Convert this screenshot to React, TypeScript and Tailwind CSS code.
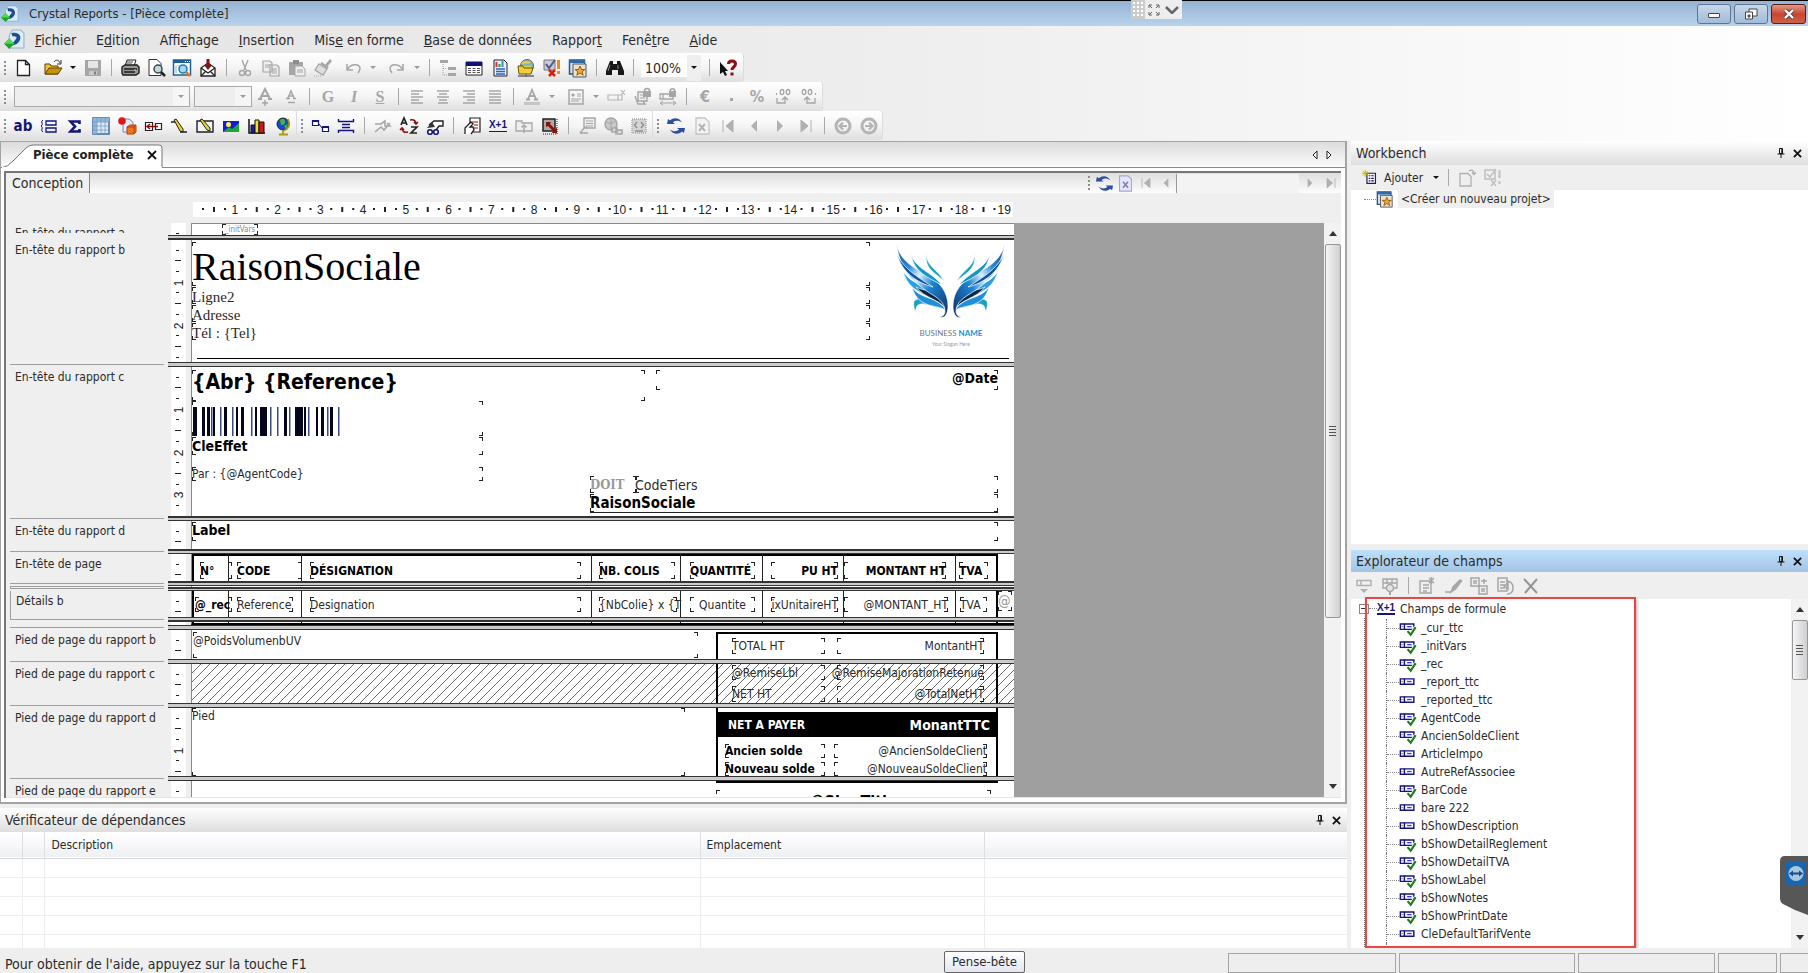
import type { ReactNode } from 'react';
import clsx from 'clsx';

/* ---------- icons (20x20 box) ---------- */

const G = '#a6a6a6';
const NAVY = '#14147c';

const icons: Record<string, ReactNode> = {
  new: <path d="M4.500 2.500h8l4 4v11h-12zM12.500 2.500v4h4" fill="#fff" stroke="#222" strokeWidth="1.300" />,
  open: (
    <>
      <path d="M2 6h5l1 2h7v8H2z" fill="#f0c040" stroke="#5a4300" />
      <path d="M2 16l4-6h13l-4 6z" fill="#c8940e" stroke="#5a4300" />
      <path d="M11 4c2-3 5-2 6 1m1-3v4h-4" fill="none" stroke="#333" />
    </>
  ),
  save: (
    <>
      <path d="M2 2h16v16H2z" fill={G} />
      <path d="M5 3h10v7H5z" fill="#e6e6e6" />
      <path d="M6 13h8v4H6z" fill="#c9c9c9" />
      <path d="M11 13.500h2v3h-2z" fill="#808080" />
    </>
  ),
  print: (
    <>
      <path d="M7 2h9l-2 6H5z" fill="#fff" stroke="#222" />
      <path d="M2 9l3-2h12l2 2v6l-3 2H3l-1-2z" fill="#999" stroke="#1a1a1a" strokeWidth="1.400" />
      <path d="M4 11h13M4 14h11" stroke="#1a1a1a" strokeWidth="1.400" />
      <path d="M7 4h6M6 6h6" stroke="#444" />
      <path d="M14 12h2" stroke="#e6d24a" />
    </>
  ),
  preview: (
    <>
      <path d="M3 1.500h8l4 4v12H3z" fill="#fff" stroke="#333" />
      <circle cx="12" cy="11" r="4" fill="#bcd8de" stroke="#444" strokeWidth="1.500" />
      <path d="M15 14l4 4" stroke="#222" strokeWidth="2.500" />
    </>
  ),
  html: (
    <>
      <path d="M1.500 2h17v15h-17z" fill="#fff" stroke="#1f5f9c" strokeWidth="1.500" />
      <path d="M1 2h18v3H1z" fill="#1f5f9c" />
      <path d="M13 3.500h1m1 0h1m1 0h1" stroke="#fff" />
      <circle cx="11" cy="11" r="4" fill="#9fdcf0" stroke="#2a7ab0" strokeWidth="1.600" />
      <path d="M4 8v7M6 7v1" stroke="#7aaed4" />
      <path d="M14 14l4 4" stroke="#e07b1a" strokeWidth="2.500" />
    </>
  ),
  mail: (
    <>
      <path d="M3 10l7-5 7 5v8H3z" fill="#fff" stroke="#222" strokeWidth="1.300" />
      <path d="M3 10l7 5 7-5M3 18l5-5M17 18l-5-5" fill="none" stroke="#222" strokeWidth="1.300" />
      <path d="M8.500 1h3v6H14l-4 5-4-5h2.500z" fill="#8c1010" />
    </>
  ),
  cut: (
    <g fill="none" stroke={G} strokeWidth="1.400">
      <path d="M7 2l4 10M13 2L9 12" />
      <circle cx="7" cy="15" r="2.500" />
      <circle cx="13" cy="15" r="2.500" />
    </g>
  ),
  copy: (
    <g fill="#eee" stroke={G} strokeWidth="1.200">
      <path d="M2 3h7l2 2v9H2zM9 7h7l2 2v9H9z" />
      <path d="M4 7h5M4 9h4M11 11h5M11 13h5M11 15h5" />
    </g>
  ),
  paste: (
    <>
      <path d="M2 4h14v13H2z" fill={G} />
      <path d="M6 2h6v4H6z" fill="#8d8d8d" />
      <path d="M8 8h7l3 3v7H8z" fill="#eee" stroke={G} />
      <path d="M10 12h6M10 14h6" stroke={G} />
    </>
  ),
  brush: (
    <>
      <path d="M12 7l5-6 2 2-5 6z" fill={G} />
      <path d="M6 6l8 5-4 6-8-5z" fill="#ddd" stroke={G} strokeWidth="1.300" />
      <path d="M8 5l7 5" stroke={G} strokeWidth="2.500" />
      <path d="M1 18h7" stroke={G} strokeDasharray="1 1" />
    </>
  ),
  undo: <path d="M4 6v6h6M5 11c2-5 11-6 12-1q0 3-2 5" fill="none" stroke={G} strokeWidth="1.500" />,
  redo: <path d="M16 6v6h-6M15 11c-2-5-11-6-12-1q0 3 2 5" fill="none" stroke={G} strokeWidth="1.500" />,
  tree: (
    <>
      <path d="M2 2h8v3H2zM10 9h8v3h-8zM10 15h8v3h-8z" fill={G} />
      <path d="M5 6v11h4M5 10.500h4" fill="none" stroke={G} strokeDasharray="1 1" />
    </>
  ),
  grid: (
    <>
      <path d="M2 4h16v13H2z" fill="#fff" stroke="#222" />
      <path d="M2 4h16v4H2z" fill="#101078" />
      <path d="M4 10.500h3m1.500 0h3m1.500 0h3M4 12.500h3m1.500 0h3m1.500 0h3M4 14.500h3m1.500 0h3m1.500 0h3" stroke="#555" />
    </>
  ),
  chartdoc: (
    <>
      <path d="M4 2h10l3 3v13H4z" fill="#e8f1fa" stroke="#222" />
      <path d="M6 11h9M6 13.500h9M6 16h9" stroke="#2f62c0" strokeWidth="1.500" />
      <path d="M6.500 4v5" stroke="#d33" strokeWidth="2" />
      <path d="M9.500 6v3" stroke="#2a9a3a" strokeWidth="2" />
      <path d="M12.500 3v6" stroke="#2f8fd8" strokeWidth="2" />
    </>
  ),
  globefolder: (
    <>
      <circle cx="11" cy="8" r="6.500" fill="#7ab8c8" stroke="#666" />
      <path d="M6 6c3-4 5 0 8-2M7 9c3-1 4 2 8-1" fill="none" stroke="#f0d040" strokeWidth="2" />
      <path d="M2 8h5l1 2h9l-2 6H3z" fill="#f0cf3c" stroke="#6d5600" />
      <path d="M2 18h16M10 16v3" stroke="#666" strokeWidth="1.500" />
    </>
  ),
  checkx: (
    <>
      <path d="M2 2h11v10H2z" fill="#c9cbdc" stroke="#777" />
      <path d="M4 6l3 4 6-8" fill="none" stroke="#55597c" strokeWidth="2" />
      <path d="M7 12l6 6M13 12l-6 6" stroke="#d5200f" strokeWidth="2.500" />
      <path d="M16.500 2v9M16.500 13v3" stroke="#f08a14" strokeWidth="3" />
    </>
  ),
  workbench: (
    <>
      <path d="M1.500 2h15v14h-15z" fill="#d8dfea" stroke="#2d557f" strokeWidth="1.500" />
      <path d="M1 2h16v3H1z" fill="#2f6aa8" />
      <path d="M5 6h13v13H5z" fill="#e8e2d0" stroke="#556" />
      <path
        d="M12 8l1.500 3.500H17l-2.800 2.200 1 3.500L12 15l-3.200 2.200 1-3.500L7 11.500h3.500z"
        fill="#f7a62b"
        stroke="#7a4a00"
        strokeWidth=".8"
      />
    </>
  ),
  binoc: (
    <>
      <path d="M5 3h3v3h4V3h3l4 10v4h-6v-5H7v5H1v-4z" fill="#181818" />
      <path d="M5 7l-2 6M13 7v4" stroke="#aaa" strokeWidth=".8" />
    </>
  ),
  help: (
    <>
      <path d="M2 4v12l3-2 2 4 2-1-2-4h3z" fill="#111" />
      <path d="M10.500 6c0-4 7-4 7 0 0 3-3.500 3-3.500 6M14 14.500v3" fill="none" stroke="#8a0f14" strokeWidth="3" />
    </>
  ),
  grow: (
    <>
      <path d="M5 12l5-10 5 10M7 9h6M3 12h4M13 12h4" fill="none" stroke={G} strokeWidth="2" />
      <path d="M10 13v6M7 16h6" stroke={G} strokeWidth="1.500" />
    </>
  ),
  shrink: <path d="M7 11l3-7 3 7M8 9h4M5 11.500h4M12 11.500h3M7 15.500h7" fill="none" stroke={G} strokeWidth="1.600" />,
  left: <path d="M4 4h12M4 7h8M4 10h12M4 13h8M4 16h12" stroke={G} strokeWidth="1.500" />,
  center: <path d="M4 4h12M6 7h8M4 10h12M6 13h8M5 16h10" stroke={G} strokeWidth="1.500" />,
  right: <path d="M4 4h12M8 7h8M4 10h12M8 13h8M4 16h12" stroke={G} strokeWidth="1.500" />,
  justify: <path d="M4 4h12M4 7h12M4 10h12M4 13h12M4 16h12" stroke={G} strokeWidth="1.500" />,
  color: (
    <>
      <path d="M6 12l4-9 4 9M7 9h6M4 12.500h4M12 12.500h4" fill="none" stroke={G} strokeWidth="1.800" />
      <path d="M2 15h16v3H2z" fill="#c4c4c4" />
    </>
  ),
  border: (
    <>
      <path d="M3 3h14v14H3z" fill="none" stroke={G} strokeWidth="1.500" />
      <path d="M6 7h2v2H6zM11 7h4M11 9h4M5 12h10M5 14h8" fill={G} stroke={G} />
    </>
  ),
  suppress: <path d="M2 8h14v5H2zM12 8v5M15 3l4 5M19 3l-4 5" fill="none" stroke="#b8b8b8" strokeWidth="1.200" />,
  lockfmt: (
    <>
      <path d="M6 5h9v9H6zM3 9l3 8h7l-2-3" fill="#eee" stroke={G} strokeWidth="1.400" />
      <path d="M8 8h5M8 11h5" stroke={G} />
      <path d="M11 4h8v6h-8z" fill={G} />
      <circle cx="15" cy="4" r="2.500" fill="none" stroke={G} strokeWidth="1.500" />
    </>
  ),
  locksize: (
    <>
      <path d="M2 7h13v5H2zM5 7v5" fill="none" stroke={G} strokeWidth="1.300" />
      <path d="M11 4h7v6h-7z" fill={G} />
      <circle cx="14.500" cy="4" r="2.300" fill="none" stroke={G} strokeWidth="1.400" />
      <path d="M3 16h14M5 14l-3 2 3 2M15 14l3 2-3 2" fill="none" stroke={G} />
    </>
  ),
  dot: <path d="M9 11h3v3H9z" fill={G} />,
  decplus: (
    <g fill="none" stroke={G} strokeWidth="1.300">
      <path d="M3 7h1" strokeWidth="2" />
      <ellipse cx="9" cy="5" rx="1.800" ry="2.500" />
      <ellipse cx="15" cy="5" rx="1.800" ry="2.500" />
      <path d="M4 11v5h8v-5M9 13l3-3 3 3" />
    </g>
  ),
  decminus: (
    <g fill="none" stroke={G} strokeWidth="1.300">
      <ellipse cx="5" cy="5" rx="1.800" ry="2.500" />
      <ellipse cx="11" cy="5" rx="1.800" ry="2.500" />
      <path d="M16 7h1" strokeWidth="2" />
      <path d="M16 11v5H8v-5M5 13l3-3 3 3" />
    </g>
  ),
  group: (
    <g fill="none" stroke={NAVY} strokeWidth="1.300">
      <path d="M7 5h10v4H7zM7 12h10v4H7z" />
      <path d="M4 4q-2 1-1 3t-1 3q2 1 1 3t1 3" strokeWidth="1" />
    </g>
  ),
  sigma: <path d="M14.500 8V5.500H5.500L10 10.500l-4.500 5h9V13" fill="none" stroke={NAVY} strokeWidth="2.600" />,
  crosstab: (
    <>
      <path d="M2 2h16v16H2z" fill="#dcebf8" stroke="#3f6c9c" strokeWidth="1.500" />
      <path d="M2 2h16v4H2zM2 2h4v16H2z" fill="#8fb5dc" />
      <path d="M6 2v16M10 2v16M14 2v16M2 6h16M2 10h16M2 14h16" stroke="#7c9cc0" strokeWidth=".8" />
    </>
  ),
  olap: (
    <>
      <path d="M6 3h6l4 3v10H6z" fill="#e3ecff" stroke="#7088b8" />
      <circle cx="5" cy="5" r="3.800" fill="#dd1a12" />
      <path d="M10 11l3-2h6v7l-2 2h-7z" fill="#f0761a" stroke="#b83c08" />
      <path d="M10 11h7v7M17 11l2-2" fill="none" stroke="#b83c08" />
    </>
  ),
  subreport: (
    <>
      <path d="M2.500 6.500h7v8h-7zM12.500 7.500h6v6h-6z" fill="#fff" stroke="#222" strokeWidth="1.200" />
      <path d="M4 10.500h11M7 8l-3 2.500L7 13" fill="none" stroke="#8c1010" strokeWidth="1.500" />
    </>
  ),
  line: (
    <>
      <path d="M5 4l2-1 7 10v3l-3-1z" fill="#e9d52a" stroke="#222" />
      <path d="M2 6h4M11 16h7" stroke="#222" strokeWidth="1.400" />
    </>
  ),
  box: (
    <>
      <path d="M2 5h16v11H2z" fill="#f4f4f4" stroke="#222" strokeWidth="1.400" />
      <path d="M5 4l2-1 8 9v3l-3-1z" fill="#e9d52a" stroke="#222" />
    </>
  ),
  picture: (
    <>
      <path d="M2 5h16v11H2z" fill="#1818d8" />
      <path d="M2 16l6-5 3 2 7-6v9z" fill="#18a838" />
      <circle cx="7.500" cy="8.500" r="2.500" fill="#fff34a" />
    </>
  ),
  chart: (
    <>
      <path d="M2 3v14h16" fill="none" stroke="#111" strokeWidth="1.500" />
      <path d="M4 9h4v8H4z" fill="#1a1ac0" stroke="#111" />
      <path d="M8 4h4v13H8z" fill="#f4e02a" stroke="#111" />
      <path d="M12 6h5v11h-5z" fill="#d01818" stroke="#111" />
    </>
  ),
  globe: (
    <>
      <circle cx="10" cy="8" r="6" fill="#1c46c8" stroke="#222" />
      <path d="M7 4q4-3 5 1t-4 4zM11 10l4-2-2 5z" fill="#3cba3c" />
      <path d="M15 3q4 9-5 12v3M6 18.500h9" fill="none" stroke="#b09a10" strokeWidth="1.800" />
    </>
  ),
  link: (
    <>
      <path d="M2.500 4.500h6v5h-6zM12.500 10.500h6v5h-6z" fill="#fff" stroke={NAVY} strokeWidth="1.200" />
      <path d="M2 4h7v2H2zM12 10h7v2h-7z" fill={NAVY} />
      <path d="M9 8l3 4" stroke="#222" />
    </>
  ),
  sections: (
    <path
      d="M2.500 3v2.500h15V3M2.500 17v-2.500h15V17M6 8.500h8M6 11.500h8"
      stroke={NAVY}
      strokeWidth="1.400"
      fill="none"
    />
  ),
  topn: <path d="M2 8h6l4-3v5h5l-3-3M2 16l6-5 3 3 6-7" fill="none" stroke={G} strokeWidth="1.600" />,
  sort: (
    <>
      <path d="M2 9l3-7 3 7M3 7h4M12 11h6l-6 6h6" fill="none" stroke="#222" strokeWidth="1.700" />
      <path
        d="M11 4c4-1 6 1 6 4M15 6l2 2 2-2M9 16c-4 1-6-1-6-4M5 14l-2-2-2 2"
        fill="none"
        stroke="#8c1414"
        strokeWidth="1.600"
      />
    </>
  ),
  groupsort: (
    <>
      <path d="M4 9l5-4h9v5h-4l-3 4" fill="#fff" stroke="#222" strokeWidth="1.400" />
      <path d="M2 12l5-6 3 5z" fill="#333" />
      <circle cx="5" cy="16" r="2.300" fill="#fff" stroke={NAVY} strokeWidth="1.600" />
      <circle cx="11" cy="16" r="2.300" fill="#fff" stroke={NAVY} strokeWidth="1.600" />
    </>
  ),
  select: (
    <>
      <path d="M8 2h10v14H8z" fill="#fff" stroke="#222" strokeWidth="1.200" />
      <path d="M10 6h6M12 9h4M12 12h4" stroke="#8c1414" />
      <path d="M3 18v-6l6-6 2 2-3 3h3l1 3-3 4" fill="#fff" stroke="#222" strokeWidth="1.300" />
    </>
  ),
  folderup: (
    <>
      <path d="M2 5h6v2h10v8H2z" fill="#eee" stroke={G} strokeWidth="1.300" />
      <path d="M10 17V9M7.500 11.500L10 9l2.500 2.500" fill="none" stroke={G} strokeWidth="1.400" />
    </>
  ),
  resize: (
    <>
      <path d="M3 3h12v12H3z" fill="#aaa" stroke="#222" strokeWidth="1.500" />
      <path d="M17 3v15H3" fill="none" stroke="#222" strokeDasharray="1 1" />
      <path d="M6 6h5l-1 2 5 5 2-1v5h-5l1-2-5-5-2 1z" fill="#8c1010" />
    </>
  ),
  hand: (
    <>
      <path d="M7 2h11v10H7zM3 17l5-6 2 1M3 17h8" fill="#eee" stroke={G} strokeWidth="1.400" />
      <path d="M9 5h7M9 7.500h7M9 10h7" stroke={G} />
    </>
  ),
  globelink: (
    <>
      <circle cx="8" cy="8" r="6" fill="#c9c9c9" stroke={G} strokeWidth="1.500" />
      <path d="M3 6q4 3 10-1M8 2v12" fill="none" stroke={G} />
      <path d="M9 12h5v4H9zM13 14h6v4h-6z" fill="#ddd" stroke={G} strokeWidth="1.600" />
    </>
  ),
  codebox: (
    <>
      <path d="M3 3h14v14H3z" fill="#d4d4d4" stroke={G} strokeWidth="1.500" strokeDasharray="1 1" />
      <path d="M8 6L5.500 9 8 12M12 6l2.500 3L12 12M6 15h8" fill="none" stroke="#909090" strokeWidth="1.500" />
    </>
  ),
  refresh: (
    <g fill="#2b4f9e">
      <path d="M1 8h8L6.800 6.200c3-2 6-2 9.200.3C13.500 1.500 7.500 1 4 4.500L2 3z" />
      <path d="M19 12h-8l2.200 1.800c-3 2-6 2-9.200-.3 2.500 5 8.500 5.500 12 2L18 17z" />
    </g>
  ),
  stop: (
    <>
      <path d="M4 2h9l4 4v12H4z" fill="#f4f4f4" stroke="#c4c4c4" strokeWidth="1.300" />
      <path d="M7 8l6 7M13 8l-6 7" stroke="#b4b4b4" strokeWidth="2" />
    </>
  ),
  stopblue: (
    <>
      <path d="M3 1h10l4 4v14H3z" fill="#e6e6fa" stroke="#a8a8cc" strokeWidth="1.300" />
      <path d="M7 8l6 7M13 8l-6 7" stroke="#7c7cae" strokeWidth="1.800" />
    </>
  ),
  first: <path d="M5 4v12M15 4v12l-7-6z" fill="#b0b0b0" stroke="#b0b0b0" />,
  prev: <path d="M13 4v12l-6-6z" fill="#b0b0b0" />,
  next: <path d="M7 4v12l6-6z" fill="#b0b0b0" />,
  last: <path d="M15 4v12M5 4v12l7-6z" fill="#b0b0b0" stroke="#b0b0b0" />,
  back: (
    <>
      <circle cx="10" cy="10" r="7" fill="none" stroke="#b4b4b4" strokeWidth="3" />
      <path d="M14 10H7M10 6.500L6.500 10l3.500 3.500" fill="none" stroke="#b4b4b4" strokeWidth="2.200" />
    </>
  ),
  forward: (
    <>
      <circle cx="10" cy="10" r="7" fill="none" stroke="#b4b4b4" strokeWidth="3" />
      <path d="M6 10h7M10 6.500l3.500 3.500-3.500 3.500" fill="none" stroke="#b4b4b4" strokeWidth="2.200" />
    </>
  ),
  add: (
    <>
      <path d="M7 5h10v12H7z" fill="#fff" stroke="#223" strokeWidth="1.400" />
      <path d="M9 8h2M12 8h3M9 11h2M12 11h3M9 14h2M12 14h3" stroke={NAVY} strokeWidth="1.300" />
      <path d="M5 1v8M1 5h8M2 2l6 6M8 2L2 8" stroke="#c8b400" />
    </>
  ),
  newdoc: (
    <path
      d="M3 5.500h8l3 3v9.500H3zM12 3c3-2 5 0 5 3M15 4.500l2 2 2-2"
      fill="none"
      stroke="#b0b0b0"
      strokeWidth="1.300"
    />
  ),
  checkgray: (
    <>
      <path d="M2 2h10v9H2zM4 6l3 3 6-8M8 12l5 6M13 12l-5 6" fill="none" stroke="#c0c0c0" strokeWidth="1.500" />
      <path d="M16.500 2v8M16.500 13v3" stroke="#c0c0c0" strokeWidth="2" />
    </>
  ),
  insertfield: (
    <>
      <path d="M3 4.500h14v5H3zM7 4.500v5" fill="none" stroke="#b0b0b0" strokeWidth="1.400" />
      <path d="M6 13h8l-4 4z" fill="#b0b0b0" />
    </>
  ),
  browse: (
    <>
      <path d="M3 3h14v9H3zM7 3v5M12 3v5M3 7h14" fill="none" stroke={G} strokeWidth="1.400" />
      <circle cx="10" cy="12" r="3.500" fill="#e4e4e4" stroke={G} strokeWidth="1.500" />
      <path d="M10 15v4" stroke={G} strokeWidth="2" />
    </>
  ),
  newfield: (
    <path
      d="M3 5h11v12H3zM6 9h6M6 12h6M6 15h4M17 2l-5 5M12 2l5 5M14.500 1v7"
      fill="none"
      stroke={G}
      strokeWidth="1.400"
    />
  ),
  pencil: <path d="M2 16h7M8 16l2-5 7-7 1.500 1-6 8z" fill={G} stroke={G} strokeWidth="1.500" />,
  duplicate: (
    <path
      d="M2 2h8v8H2zM4 5h4M4 7h4M10 10h8v8h-8zM12 13h4M12 15h4M15 3v5M12 5h6"
      fill="none"
      stroke={G}
      strokeWidth="1.500"
    />
  ),
  rename: (
    <>
      <path d="M3 2h9v13H3zM5 6h5M5 9h5M5 12h5" fill="none" stroke={G} strokeWidth="1.500" />
      <path d="M11 5c5 0 7 3 7 7s-2 6-6 6M9 10l4-3v6z" fill="none" stroke={G} strokeWidth="1.500" />
    </>
  ),
  remove: <path d="M3 3l13 14M16 3L4 17" stroke="#959595" strokeWidth="2" />,
  field: (
    <>
      <path d="M1.500 6.500h15v6h-15z" fill="#fff" stroke={NAVY} strokeWidth="1.600" />
      <path d="M6 6v7" stroke={NAVY} strokeWidth="1.600" />
      <path d="M9 9.500h5" stroke="#3a3aff" strokeWidth="1.500" />
      <path d="M3 9.500h1" stroke={NAVY} />
    </>
  ),
  fieldused: (
    <>
      <path d="M1.500 5.500h15v6h-15z" fill="#fff" stroke={NAVY} strokeWidth="1.600" />
      <path d="M6 5v7" stroke={NAVY} strokeWidth="1.600" />
      <path d="M9 8.500h5" stroke="#3a3aff" strokeWidth="1.500" />
      <path d="M3 8.500h1" stroke={NAVY} />
      <path d="M9.500 13.500l3.500 4L18.500 9" fill="none" stroke="#fff" strokeWidth="4" />
      <path d="M9.500 13.500l3.500 4L18.500 9" fill="none" stroke="#1d7d1d" strokeWidth="2.400" />
    </>
  ),
  app: (
    <>
      <path d="M8 1h8l3 3v14H5V6z" fill="#dcecf6" stroke="#8fb4d0" />
      <path d="M7 4c7-2 10 3 8 7s-6 5-8 4l4-5c2-2 1-3-3-3z" fill="#1f4d94" />
      <path d="M5 9l5 5-5 5-5-5z" fill="#1ea528" />
      <path d="M5 9l5 5H0z" fill="#52d858" />
    </>
  ),
};

// letters drawn on the buttons that carry text instead of a glyph
const lettered: Record<string, ReactNode> = {
  ab: <span className="text-[15px] font-bold text-[#14147c]">ab</span>,
  formula: (
    <span className="border-b border-[#14147c] font-['Liberation_Sans',sans-serif] text-[10px] leading-[12px] font-bold text-[#14147c]">
      X+1
    </span>
  ),
  bold: <span className="font-['Liberation_Serif',serif] text-[16px] font-bold text-[#a6a6a6]">G</span>,
  italic: <span className="font-['Liberation_Serif',serif] text-[16px] font-bold text-[#a6a6a6] italic">I</span>,
  underline: (
    <span className="font-['Liberation_Serif',serif] text-[16px] font-bold text-[#a6a6a6] underline">S</span>
  ),
  euro: <span className="text-[16px] font-bold text-[#a6a6a6]">€</span>,
  percent: <span className="text-[16px] font-bold text-[#a6a6a6]">%</span>,
};

function Icon({ name, className = 'size-5' }: { name: string; className?: string }) {
  return (
    <svg viewBox="0 0 20 20" className={clsx('shrink-0', className)} aria-hidden="true">
      {icons[name]}
    </svg>
  );
}

function Tool({ name, className }: { name: string; className?: string }) {
  return (
    <button
      type="button"
      aria-label={name}
      className={clsx('flex h-[26px] w-[26px] shrink-0 items-center justify-center', className)}
    >
      {lettered[name] ?? <Icon name={name} />}
    </button>
  );
}

function Tools({ names }: { names: string[] }) {
  return names.map((n) => <Tool key={n} name={n} />);
}

function Sep() {
  return <span className="mx-[5px] h-[17px] w-px shrink-0 bg-[#a8a8a8]" />;
}

function Drop({ dark = false }: { dark?: boolean }) {
  return (
    <button type="button" aria-label="options" className="flex h-[26px] w-[14px] shrink-0 items-center justify-center">
      <svg viewBox="0 0 8 4" className="h-[3px] w-[6px]">
        <path d="M0 0h8L4 4z" fill={dark ? '#111' : '#999'} />
      </svg>
    </button>
  );
}

function Grip() {
  return (
    <span className="flex w-[10px] shrink-0 flex-col items-center gap-[2px]">
      {[0, 1, 2, 3].map((i) => (
        <i key={i} className="size-[2px] bg-[#8f8f8f]" />
      ))}
    </span>
  );
}

function Bar({ className, children }: { className?: string; children: ReactNode }) {
  return (
    <div
      className={clsx(
        'flex h-[29px] items-center rounded-r-[3px] border-r border-[#dcdcdc] bg-gradient-to-b from-white via-[#f5f5f5] to-[#dedede]',
        className,
      )}
    >
      {children}
    </div>
  );
}

function ComboBox({ label, className }: { label: string; className: string }) {
  return (
    <div className={clsx('ml-1 flex h-[21px] items-stretch border border-[#a9a9a9] bg-[#eee]', className)}>
      <input aria-label={label} className="min-w-0 flex-1 outline-none" />
      <button type="button" aria-label={label} className="flex w-4 items-center justify-center bg-[#f6f6f6]">
        <svg viewBox="0 0 8 4" className="h-[3px] w-[6px]">
          <path d="M0 0h8L4 4z" fill="#999" />
        </svg>
      </button>
    </div>
  );
}

/* ---------- panels ---------- */

function PinClose() {
  return (
    <div className="flex items-center gap-2 pr-[6px]">
      <button type="button" aria-label="Épingler">
        <svg viewBox="0 0 8 10" className="h-[10px] w-2">
          <path d="M2.500 .5h3v5h-3zM.5 6h7M4 6v4" fill="none" stroke="#111" />
          <path d="M5 1v5" stroke="#111" strokeWidth="1.400" />
        </svg>
      </button>
      <button type="button" aria-label="Fermer">
        <svg viewBox="0 0 10 10" className="size-[9px]">
          <path d="M1 1l8 8M9 1L1 9" stroke="#111" strokeWidth="2" />
        </svg>
      </button>
    </div>
  );
}

function PanelHeader({ title, active = false }: { title: string; active?: boolean }) {
  return (
    <div
      className={clsx(
        'flex shrink-0 items-center justify-between pl-[5px]',
        active
          ? 'h-[22px] bg-gradient-to-b from-[#bfe0fc] to-[#a3c5e4]'
          : 'h-6 bg-gradient-to-b from-white to-[#dedede]',
      )}
    >
      <h2 className="text-[14px]">{title}</h2>
      <PinClose />
    </div>
  );
}

function ScrollBar({ thumb }: { thumb: string }) {
  return (
    <div className="flex w-[17px] shrink-0 flex-col items-center bg-[#f2f2f2]">
      <svg viewBox="0 0 8 5" className="my-2 h-[5px] w-2">
        <path d="M4 0l4 5H0z" fill="#333" />
      </svg>
      <div
        className={clsx(
          'flex w-4 flex-col items-center justify-center gap-[2px] rounded-[2px] border border-[#979797] bg-gradient-to-r from-[#f5f5f5] to-[#cfcfd2]',
          thumb,
        )}
      >
        {[0, 1, 2, 3].map((i) => (
          <i key={i} className="h-px w-[7px] bg-[#555]" />
        ))}
      </div>
      <svg viewBox="0 0 8 5" className="mt-auto mb-2 h-[5px] w-2">
        <path d="M4 5L0 0h8z" fill="#333" />
      </svg>
    </div>
  );
}

/* ---------- report canvas ---------- */

const CM = 42.75;

function HorizontalRuler() {
  return (
    <svg className="h-[15px] w-[820px] bg-white" aria-hidden="true">
      {Array.from({ length: 19 }, (_, i) => {
        const x = i * CM - 1;
        return (
          <g key={i} fill="#222">
            <rect x={x + 10} y="6" width="2" height="2" />
            <rect x={x + 21} y="5" width="2" height="5" />
            <rect x={x + 32} y="6" width="2" height="2" />
            <text x={x + CM} y="12" textAnchor="middle" className="font-['Liberation_Sans',sans-serif] text-[12px]">
              {i + 1}
            </text>
          </g>
        );
      })}
    </svg>
  );
}

function VerticalRuler({ height }: { height: number }) {
  const marks = [];
  for (let i = 1; (i * CM) / 4 < height - 1; i++) {
    const y = Math.round((i * CM) / 4);
    if (i % 4 === 0) {
      marks.push(
        <text
          key={i}
          transform={`translate(12 ${y}) rotate(-90)`}
          textAnchor="middle"
          className="font-['Liberation_Sans',sans-serif] text-[12px]"
        >
          {i / 4}
        </text>,
      );
    } else {
      marks.push(
        i % 2 === 0 ? (
          <rect key={i} x="4" y={y - 1} width="6" height="1" />
        ) : (
          <rect key={i} x="5" y={y - 1} width="3" height="1" />
        ),
      );
    }
  }
  return (
    <svg className="ml-[3px] h-full w-[15px] shrink-0 bg-white" fill="#222" aria-hidden="true">
      {marks}
    </svg>
  );
}

interface SectionProps {
  label?: string;
  height: number;
  size: string;
  band?: string;
  labelClass?: string;
  paperClass?: string;
  children?: ReactNode;
}

function Section({ label, height, size, band = 'h-[5px] border-y', labelClass, paperClass, children }: SectionProps) {
  return (
    <div className="flex">
      <div className="w-[162px] shrink-0 px-1 pb-[2px]">
        <div className={clsx('h-full border-b border-[#a0a0a0]', labelClass)}>
          {label && <p className="pt-[2px] pl-[5px] leading-4">{label}</p>}
        </div>
      </div>
      <div className="w-[846px] shrink-0">
        <div className={clsx('flex', size)}>
          <VerticalRuler height={height} />
          <div className={clsx('relative ml-[5px] flex-1 border-l border-[#8a8a8a] bg-white', paperClass)}>{children}</div>
        </div>
        <div className={clsx('relative border-[#333] bg-[#cbcbcb]', band)} />
      </div>
    </div>
  );
}

// a report object: free position on the paper, with its four corner ticks
function Field({ at, className, children }: { at: string; className?: string; children?: ReactNode }) {
  return (
    <div className={clsx('absolute', at)}>
      <i className="absolute top-0 left-0 size-1 border-t border-l border-[#222]" />
      <i className="absolute top-0 right-0 size-1 border-t border-r border-[#222]" />
      <i className="absolute bottom-0 left-0 size-1 border-b border-l border-[#222]" />
      <i className="absolute right-0 bottom-0 size-1 border-r border-b border-[#222]" />
      <div className={clsx('flex h-full items-center whitespace-nowrap', className)}>{children}</div>
    </div>
  );
}

function ColumnLines() {
  return (
    <>
      {[
        'left-[36px]',
        'left-[109px]',
        'left-[399px]',
        'left-[488px]',
        'left-[570px]',
        'left-[651px]',
        'left-[763px]',
      ].map((left) => (
        <i key={left} className={clsx('absolute inset-y-0 w-px bg-[#222]', left)} />
      ))}
      <i className="absolute inset-y-0 left-0 w-[806px] border-x-2 border-black" />
    </>
  );
}

function TotalsEdges({ className = 'inset-y-0' }: { className?: string }) {
  return <i className={clsx('absolute left-[524px] w-[282px] border-x-2 border-black', className)} />;
}

function Barcode() {
  const bars = [
    [0, 4], [9, 3], [14, 3], [18, 1], [20, 2], [27, 1], [31, 3], [39, 1], [43, 2], [48, 3], [58, 1], [62, 2],
    [67, 7], [77, 1], [84, 1], [91, 3], [96, 1], [102, 8], [111, 2], [115, 1], [123, 2], [128, 3], [134, 1],
    [137, 3], [145, 1],
  ];
  return (
    <svg className="absolute top-[40px] left-[1px] h-[29px] w-[147px]" aria-hidden="true">
      {bars.map(([x, w]) => (
        <rect key={x} x={x} width={w === 1 ? 1.5 : w} height="29" fill={w === 1 ? '#3a4a86' : '#05051c'} />
      ))}
    </svg>
  );
}

function Wing() {
  return (
    <g stroke="#fff" strokeWidth=".7">
      <path d="M18 60c8-6 19 0 30 7-10 1-21-8-27-2l-2 6c-1-4-2-8-1-11z" fill="#19a0c4" />
      <path d="M16 46c10 14 26 8 35 25C45 62 22 70 16 46z" fill="#1e8fd8" />
      <path d="M7 30c8 14 24 14 33 21 6 4 10 9 9 16C40 52 14 57 7 30z" fill="#2aa0e4" />
      <path d="M20 46c8 4 20 4 27 9 4 3 6 9 4 15-6-12-22-12-31-24z" fill="#0a2747" />
      <path
        d="M0 0c2 17 14 25 31 34 13 7 21 17 21 31 0 9-4 13-8 11 5-1 6-5 4-11-4-9-15-12-24-20C12 36 3 24 0 0z"
        fill="url(#wing)"
      />
      <path d="M1 13c8 17 23 24 36 33C22 42 6 32 1 13z" fill="#12549c" />
      <path d="M15 11c1 15 21 20 31 33-13-7-30-13-31-33z" fill="#1797c0" />
      <path d="M31 12c-2 13 11 16 17 28-9-8-21-13-17-28z" fill="#1fa3c0" />
    </g>
  );
}

function Logo() {
  return (
    <div className="absolute top-[1px] left-[704px] flex w-[110px] flex-col items-center">
      <svg viewBox="0 0 110 78" className="h-[78px] w-[110px]" aria-hidden="true">
        <defs>
          <linearGradient id="wing" x1="0" y1="0" x2="1" y2="1">
            <stop offset="0" stopColor="#0c3a80" />
            <stop offset=".3" stopColor="#2f8fdc" />
            <stop offset=".45" stopColor="#d8efff" />
            <stop offset=".62" stopColor="#1e86d6" />
            <stop offset="1" stopColor="#0b2c5e" />
          </linearGradient>
        </defs>
        <Wing />
        <g transform="translate(109 0) scale(-1 1)">
          <Wing />
        </g>
      </svg>
      <p className="mt-2 font-['Lato',sans-serif] text-[8px] leading-3 text-[#777]">
        BUSINESS <b className="text-[#1a8fd6]">NAME</b>
      </p>
      <p className="font-['Lato',sans-serif] text-[5px] leading-[10px] text-[#999]">Your Slogan Here</p>
    </div>
  );
}

function Hatch() {
  return (
    <svg className="absolute inset-0 h-full w-full" aria-hidden="true">
      <defs>
        <pattern id="hatch" width="9" height="9" patternUnits="userSpaceOnUse">
          <path d="M-1 10L10 -1M-1 1l2-2M8 10l2-2" stroke="#6a6a6a" />
        </pattern>
      </defs>
      <rect width="100%" height="100%" fill="url(#hatch)" />
    </svg>
  );
}

function ReportCanvas() {
  return (
    <div className="w-[1008px] shrink-0 text-[12px]">
      <Section
        label="En-tête du rapport a"
        height={12}
        size="h-[12px]"
        band="h-[5px] border-t border-b-2"
        labelClass="h-[10px]! overflow-hidden border-b-0! mb-[4px]"
        paperClass="border-t"
      >
        <Field at="left-[30px] top-0 h-[11px] w-[36px]" className="justify-center text-[8px] text-[#888]">
          _initVars
        </Field>
      </Section>

      <Section label="En-tête du rapport b" height={122} size="h-[122px]">
        <Field
          at="left-0 top-[2px] h-[44px] w-[678px]"
          className="pt-[6px] font-['Liberation_Serif',serif] text-[40px] text-black"
        >
          RaisonSociale
        </Field>
        <Field at="left-0 top-[47px] h-[17px] w-[678px]" className="pt-[2px] font-['Liberation_Serif',serif] text-[15px]">
          Ligne2
        </Field>
        <Field at="left-0 top-[65px] h-[17px] w-[678px]" className="pt-[2px] font-['Liberation_Serif',serif] text-[15px]">
          Adresse
        </Field>
        <Field at="left-0 top-[83px] h-[17px] w-[678px]" className="pt-[2px] font-['Liberation_Serif',serif] text-[15px]">
          Tél : {'{Tel}'}
        </Field>
        <Logo />
        <i className="absolute top-[118px] right-[5px] left-[5px] h-px bg-black" />
      </Section>

      <Section label="En-tête du rapport c" height={149} size="h-[149px]" band="h-[5px] border-t-2 border-b">
        <Field at="left-0 top-[3px] h-[31px] w-[453px]" className="items-start! text-[21px] leading-6 font-bold text-black">
          {'{Abr} {Reference}'}
        </Field>
        <Field
          at="left-[464px] top-[3px] h-[20px] w-[342px]"
          className="items-start! justify-end text-[14px] font-bold text-black"
        >
          @Date
        </Field>
        <Field at="left-0 top-[34px] h-[35px] w-[291px]" />
        <Barcode />
        <Field at="left-0 top-[70px] h-[18px] w-[291px]" className="text-[14px] font-bold text-black">
          CleEffet
        </Field>
        <Field at="left-0 top-[100px] h-[14px] w-[291px]">{'Par : {@AgentCode}'}</Field>
        <Field
          at="left-[398px] top-[109px] h-[17px] w-[47px]"
          className="font-['DejaVu_Serif_Condensed',serif] text-[13px] font-bold text-[#999]"
        >
          DOIT
        </Field>
        <Field at="left-[443px] top-[109px] h-[17px] w-[363px]" className="text-[14px]">
          CodeTiers
        </Field>
        <Field
          at="left-[398px] top-[127px] h-[19px] w-[408px] border-b border-[#222]"
          className="text-[15px] font-bold text-black"
        >
          RaisonSociale
        </Field>
      </Section>

      <Section label="En-tête du rapport d" height={28} size="h-[28px]" band="h-[5px] border-t-2 border-b">
        <Field at="left-0 top-[1px] h-[19px] w-[806px]" className="items-start! text-[14px] font-bold text-black">
          Label
        </Field>
      </Section>

      <Section label="En-tête de page" height={27} size="h-[27px]" band="h-[5px] border-t-2 border-b">
        <i className="absolute inset-0 right-auto w-[806px] border-t-2 border-black" />
        <ColumnLines />
        <div className="contents text-[12px] font-bold text-black">
          <Field at="left-[8px] top-[8px] h-[17px] w-[32px]">N°</Field>
          <Field at="left-[45px] top-[8px] h-[17px] w-[65px]">CODE</Field>
          <Field at="left-[118px] top-[8px] h-[17px] w-[271px]">DÉSIGNATION</Field>
          <Field at="left-[407px] top-[8px] h-[17px] w-[76px]">NB. COLIS</Field>
          <Field at="left-[498px] top-[8px] h-[17px] w-[65px]">QUANTITÉ</Field>
          <Field at="left-[579px] top-[8px] h-[17px] w-[67px]" className="justify-end">
            PU HT
          </Field>
          <Field at="left-[652px] top-[8px] h-[17px] w-[102px]" className="justify-end">
            MONTANT HT
          </Field>
          <Field at="left-[767px] top-[8px] h-[17px] w-[29px]">TVA</Field>
        </div>
      </Section>

      <Section height={1} size="h-px" band="h-1 border-t-2 border-b" labelClass="border-t border-l" paperClass="bg-black" />

      <Section
        label="Détails b"
        height={26}
        size="h-[26px]"
        band="h-[5px] border-t border-b-2"
        labelClass="border-l"
      >
        <ColumnLines />
        <Field at="left-[3px] top-[6px] h-[15px] w-[37px]" className="font-bold text-black">
          @_rec
        </Field>
        <Field at="left-[45px] top-[6px] h-[15px] w-[56px]">Reference</Field>
        <Field at="left-[118px] top-[6px] h-[15px] w-[271px]">Designation</Field>
        <Field at="left-[407px] top-[6px] h-[15px] w-[78px]">{'{NbColie} x {T'}</Field>
        <Field at="left-[498px] top-[6px] h-[15px] w-[65px]" className="justify-center">
          Quantite
        </Field>
        <Field at="left-[579px] top-[6px] h-[15px] w-[67px]" className="justify-end">
          ixUnitaireHT
        </Field>
        <Field at="left-[652px] top-[6px] h-[15px] w-[104px]" className="justify-end">
          @MONTANT_HT
        </Field>
        <Field at="left-[768px] top-[6px] h-[15px] w-[27px]">TVA</Field>
        <Field at="left-[806px] top-0 h-[20px] w-[14px]" className="text-[14px] text-[#999]">
          @
        </Field>
      </Section>

      <Section height={3} size="h-[3px]" paperClass="border-b-2 border-b-black">
        <ColumnLines />
      </Section>

      <Section label="Pied de page du rapport b" height={29} size="h-[29px]">
        <Field at="left-[1px] top-[2px] h-[26px] w-[505px]" className="items-start! pt-px">
          @PoidsVolumenbUV
        </Field>
        <TotalsEdges className="top-[2px] bottom-0 border-t-2" />
        <Field at="left-[540px] top-[8px] h-[16px] w-[93px]">TOTAL HT</Field>
        <Field at="left-[645px] top-[8px] h-[16px] w-[147px]" className="justify-end">
          MontantHT
        </Field>
      </Section>

      <Section label="Pied de page du rapport c" height={39} size="h-[39px]">
        <Hatch />
        <TotalsEdges />
        <Field at="left-[540px] top-[1px] h-[15px] w-[93px]">@RemiseLbl</Field>
        <Field at="left-[645px] top-[1px] h-[15px] w-[147px]" className="justify-end">
          @RemiseMajorationRetenue
        </Field>
        <Field at="left-[540px] top-[22px] h-[16px] w-[93px]">NET HT</Field>
        <Field at="left-[645px] top-[22px] h-[16px] w-[147px]" className="justify-end">
          @TotalNetHT
        </Field>
      </Section>

      <Section label="Pied de page du rapport d" height={68} size="h-[68px]">
        <Field at="left-0 top-0 h-[68px] w-[493px]" className="items-start!">
          Pied
        </Field>
        <TotalsEdges />
        <div className="absolute top-[4px] left-[524px] flex h-[25px] w-[282px] items-center justify-between bg-black pr-2 pl-3 font-bold text-white">
          <span>NET A PAYER</span>
          <span className="text-[14px]">MonantTTC</span>
        </div>
        <Field at="left-[533px] top-[36px] h-[14px] w-[100px]" className="text-[12px] font-bold text-black">
          Ancien solde
        </Field>
        <Field at="left-[642px] top-[36px] h-[14px] w-[153px]" className="justify-end">
          @AncienSoldeClient
        </Field>
        <Field at="left-[533px] top-[54px] h-[14px] w-[100px]" className="text-[12px] font-bold text-black">
          Nouveau solde
        </Field>
        <Field at="left-[642px] top-[54px] h-[14px] w-[153px]" className="justify-end">
          @NouveauSoldeClient
        </Field>
      </Section>

      <Section label="Pied de page du rapport e" height={17} size="h-[60px]">
        <i className="absolute top-0 left-[524px] h-[2px] w-[282px] bg-black" />
        <Field at="left-[524px] top-[9px] h-[24px] w-[275px]" className="justify-center text-[16px] font-bold text-black">
          @SignTitle
        </Field>
      </Section>
    </div>
  );
}

function DocumentPane() {
  return (
    <main className="flex min-h-0 flex-1 flex-col border-t border-r-2 border-b-2 border-l border-[#a3a3a3] bg-white">
      <div className="flex h-[26px] shrink-0 items-stretch border-b border-[#8a8a8a] bg-gradient-to-b from-[#dcdcdc] to-[#fbfbfb]">
        <div className="relative -mb-px flex w-[162px] items-center">
          <svg viewBox="0 0 162 26" className="absolute inset-0 h-full w-full" aria-hidden="true">
            <path d="M0 26Q7 25 12 19L25 6Q28 3 32 3H158Q161 3 161 6V26z" fill="#fff" stroke="#777" />
            <path d="M1 26h160" stroke="#fff" strokeWidth="2" />
          </svg>
          <span className="relative ml-8 text-[13px] font-bold text-[#222]">Pièce complète</span>
          <button type="button" aria-label="Fermer l'onglet" className="relative ml-auto mr-[6px]">
            <svg viewBox="0 0 10 10" className="size-[10px]">
              <path d="M1 1l8 8M9 1L1 9" stroke="#111" strokeWidth="1.800" />
            </svg>
          </button>
        </div>
        <div className="ml-auto flex items-center gap-2 pr-[13px]">
          <svg viewBox="0 0 6 10" className="h-[10px] w-[6px]">
            <path d="M5 1v8L1 5z" fill="#fff" stroke="#222" />
          </svg>
          <svg viewBox="0 0 6 10" className="h-[10px] w-[6px]">
            <path d="M1 1v8l4-4z" fill="#fff" stroke="#222" />
          </svg>
        </div>
      </div>

      <div className="mt-[3px] mr-1 mb-1 ml-[3px] flex min-h-0 flex-1 flex-col border-t-2 border-l-2 border-[#777] bg-[#efefef]">
        <div className="flex h-5 shrink-0 items-center bg-gradient-to-b from-[#dedede] to-[#fdfdfd]">
          <button type="button" className="h-full border-r border-[#888] bg-[#f0f0f0] px-[6px] text-[14px]">
            Conception
          </button>
          <div className="ml-auto flex items-center">
            <Grip />
            <Icon name="refresh" className="mx-px size-[19px]" />
            <Icon name="stopblue" className="mx-[2px] size-[17px]" />
            <Icon name="first" className="mx-[2px] size-[16px]" />
            <Icon name="prev" className="mx-[2px] size-[16px]" />
            <input aria-label="Page" className="h-[19px] w-[123px] border-l border-[#999] bg-[#f3f3f3] outline-none" />
            <Icon name="next" className="mx-[3px] size-[16px]" />
            <Icon name="last" className="mx-[2px] size-[16px]" />
          </div>
        </div>
        <div className="flex h-[30px] shrink-0 items-center pt-[3px] pl-[187px]">
          <HorizontalRuler />
        </div>
        <div className="flex min-h-0 flex-1 border-b border-[#e4e4e4]">
          <div className="flex min-w-0 flex-1 overflow-hidden bg-[#9f9f9f]">
            <div className="bg-[#efefef]">
              <ReportCanvas />
            </div>
          </div>
          <ScrollBar thumb="h-[374px]" />
        </div>
      </div>
    </main>
  );
}

function DependencyChecker() {
  return (
    <section className="mt-1 flex h-[140px] shrink-0 flex-col overflow-hidden bg-white">
      <PanelHeader title="Vérificateur de dépendances" />
      <table className="w-full table-fixed border-collapse text-[12px]">
        <thead>
          <tr className="h-[26px] border-b border-[#d4d6da] bg-gradient-to-b from-white to-[#eff0f3] text-left">
            <th className="w-[22px] border-r border-[#dcdee2]" aria-label="État" />
            <th className="w-[22px] border-r border-[#dcdee2]" aria-label="Type" />
            <th className="w-[656px] border-r border-[#dcdee2] pl-[7px] font-normal">Description</th>
            <th className="w-[284px] border-r border-[#dcdee2] pl-[6px] font-normal">Emplacement</th>
            <th aria-label="Détail" />
          </tr>
        </thead>
        <tbody>
          {[0, 1, 2, 3, 4].map((row) => (
            <tr key={row} className="h-[19px] border-b border-[#efefef]">
              <td className="border-r border-[#ececec]" />
              <td className="border-r border-[#ececec]" />
              <td className="border-r border-[#ececec]" />
              <td className="border-r border-[#ececec]" />
              <td />
            </tr>
          ))}
        </tbody>
      </table>
    </section>
  );
}

/* ---------- right column ---------- */

const formulas: { name: string; used: boolean }[] = [
  { name: '_cur_ttc', used: true },
  { name: '_initVars', used: true },
  { name: '_rec', used: true },
  { name: '_report_ttc', used: false },
  { name: '_reported_ttc', used: false },
  { name: 'AgentCode', used: true },
  { name: 'AncienSoldeClient', used: true },
  { name: 'ArticleImpo', used: false },
  { name: 'AutreRefAssociee', used: false },
  { name: 'BarCode', used: true },
  { name: 'bare 222', used: false },
  { name: 'bShowDescription', used: false },
  { name: 'bShowDetailReglement', used: true },
  { name: 'bShowDetailTVA', used: true },
  { name: 'bShowLabel', used: true },
  { name: 'bShowNotes', used: true },
  { name: 'bShowPrintDate', used: true },
  { name: 'CleDefaultTarifVente', used: false },
  { name: 'colise', used: false },
];

function Workbench() {
  return (
    <section className="flex h-[403px] shrink-0 flex-col">
      <PanelHeader title="Workbench" />
      <div className="flex h-[25px] shrink-0 items-center bg-[#efefef] pl-[10px] text-[12px]">
        <button type="button" className="flex items-center gap-[6px]">
          <Icon name="add" className="size-[17px]" />
          Ajouter
        </button>
        <span className="ml-[6px]">
          <Drop dark />
        </span>
        <Sep />
        <Tool name="newdoc" />
        <Tool name="checkgray" />
      </div>
      <div className="flex flex-1 items-start bg-white pl-[13px]">
        <span className="mt-[9px] w-3 border-t border-dotted border-[#888]" />
        <Icon name="workbench" className="size-[18px]" />
        <a href="#projet" className="ml-1 bg-[#efefef] px-[3px] text-[12px] leading-[18px]">
          &lt;Créer un nouveau projet&gt;
        </a>
      </div>
    </section>
  );
}

function FieldExplorer() {
  return (
    <section className="relative mt-[6px] flex min-h-0 flex-1 flex-col">
      <PanelHeader title="Explorateur de champs" active />
      <div className="flex h-[27px] shrink-0 items-center bg-[#efefef]">
        <Tools names={['insertfield', 'browse']} />
        <Sep />
        <Tools names={['newfield', 'pencil', 'duplicate', 'rename', 'remove']} />
      </div>
      <div className="flex min-h-0 flex-1 bg-white">
        <div className="min-w-0 flex-1 overflow-hidden pl-2 text-[12px]">
          <div className="flex h-[19px] items-center">
            <span className="flex size-[10px] items-center justify-center border border-[#888] bg-white">
              <i className="h-px w-[6px] bg-[#333]" />
            </span>
            <span className="w-2 border-t border-dotted border-[#888]" />
            <span className="border-b-2 border-[#14147c] font-['Liberation_Sans',sans-serif] text-[10px] leading-[11px] font-bold text-[#14147c]">
              X+1
            </span>
            <span className="ml-[5px]">Champs de formule</span>
          </div>
          <ul className="ml-[5px] border-l border-dotted border-[#777] pt-px pl-[21px]">
            {formulas.map(({ name, used }) => (
              <li key={name} className="flex h-[18px] items-center border-l border-dotted border-[#777]">
                <span className="w-3 border-t border-dotted border-[#888]" />
                <Icon name={used ? 'fieldused' : 'field'} className="size-[18px]" />
                <span className="ml-1">{name}</span>
              </li>
            ))}
          </ul>
        </div>
        <ScrollBar thumb="h-[60px]" />
      </div>
      <div className="pointer-events-none absolute top-[47px] bottom-0 left-[14px] w-[271px] border-2 border-[#ee4444] shadow-[1px_2px_3px_#0005]" />
      <svg viewBox="0 0 28 60" className="absolute right-0 bottom-8 h-[60px] w-7" aria-hidden="true">
        <path d="M28 0H5Q0 0 0 5v37q0 4 3 6l12 6 13 5z" fill="#575757" />
        <rect x="6" y="6" width="20" height="23" rx="3" fill="#1666b4" />
        <circle cx="16" cy="17.500" r="7.500" fill="#a9c6dc" />
        <path d="M9 17.500l4-3v2h6v-2l4 3-4 3v-2h-6v2z" fill="#0f4f94" />
      </svg>
    </section>
  );
}

/* ---------- window ---------- */

function TitleBar() {
  return (
    <header className="relative flex h-[26px] shrink-0 items-center border-t border-black bg-gradient-to-b from-[#97b3d2] to-[#b9d3ec]">
      <Icon name="app" className="ml-px size-[18px]" />
      <h1 className="ml-[10px]">Crystal Reports - [Pièce complète]</h1>
      <div className="absolute -top-px left-[1131px] flex h-[19px] w-[51px] items-center bg-[#eee]">
        <svg viewBox="0 0 14 19" className="h-[19px] w-[14px]">
          <path d="M0 0h14v19H0z" fill="#ccc" />
          <path d="M3 2v15M7 2v15M11 2v15" stroke="#fff" strokeWidth="2" strokeDasharray="2 2" />
        </svg>
        <svg viewBox="0 0 12 12" className="ml-[3px] size-3" fill="none" stroke="#666">
          <path d="M1 4V1h3M8 1h3v3M11 8v3H8M4 11H1V8M1 1l3 3M11 1L8 4M11 11L8 8M1 11l3-3" />
        </svg>
        <svg viewBox="0 0 14 8" className="ml-[5px] h-2 w-[14px]" fill="none" stroke="#666">
          <path d="M1 1l6 6 6-6" strokeWidth="2.500" />
        </svg>
      </div>
      <div className="ml-auto flex gap-[3px] pr-[2px]">
        <button
          type="button"
          aria-label="Réduire"
          className="flex h-5 w-[34px] items-center justify-center rounded-[3px] border border-[#5d7590] bg-gradient-to-b from-[#c6d7ea] to-[#a2bcd8]"
        >
          <i className="mt-1 h-[5px] w-3 rounded-[1px] border border-[#444] bg-white" />
        </button>
        <button
          type="button"
          aria-label="Restaurer"
          className="flex h-5 w-[34px] items-center justify-center rounded-[3px] border border-[#5d7590] bg-gradient-to-b from-[#c6d7ea] to-[#a2bcd8]"
        >
          <svg viewBox="0 0 14 12" className="h-3 w-[14px]">
            <path d="M5 1h8v7H5z" fill="#fff" stroke="#444" />
            <path d="M1.500 4h7v7h-7z" fill="#fff" stroke="#444" />
            <path d="M4 7h2v2H4z" fill="#9fb6cf" stroke="#444" />
          </svg>
        </button>
        <button
          type="button"
          aria-label="Fermer"
          className="flex h-5 w-[35px] items-center justify-center rounded-[3px] border border-[#5b1d14] bg-gradient-to-b from-[#e09a8a] via-[#c8452e] to-[#d0604a]"
        >
          <svg viewBox="0 0 12 10" className="h-[10px] w-3">
            <path d="M2 1l8 8M10 1L2 9" stroke="#444" strokeWidth="4" />
            <path d="M2 1l8 8M10 1L2 9" stroke="#fff" strokeWidth="2.400" />
          </svg>
        </button>
      </div>
    </header>
  );
}

function MenuBar() {
  const item = 'px-[10px]';
  return (
    <nav className="flex h-[27px] items-center text-[14px]">
      <Icon name="app" className="ml-1 size-[21px]" />
      <a href="#fichier" className={item}><u>F</u>ichier</a>
      <a href="#edition" className={item}>E<u>d</u>ition</a>
      <a href="#affichage" className={item}>Affi<u>c</u>hage</a>
      <a href="#insertion" className={item}><u>I</u>nsertion</a>
      <a href="#format" className={item}>Mis<u>e</u> en forme</a>
      <a href="#base" className={item}><u>B</u>ase de données</a>
      <a href="#rapport" className={item}>Rappor<u>t</u></a>
      <a href="#fenetre" className={item}>Fenê<u>t</u>re</a>
      <a href="#aide" className={item}><u>A</u>ide</a>
    </nav>
  );
}

function Toolbars() {
  return (
    <div className="flex flex-col items-start">
      <Bar className="pr-[2px]">
        <Grip />
        <Tool name="new" />
        <Tool name="open" className="ml-1" />
        <Drop dark />
        <Tool name="save" />
        <Sep />
        <Tools names={['print', 'preview', 'html', 'mail']} />
        <Sep />
        <Tools names={['cut', 'copy', 'paste', 'brush']} />
        <Tool name="undo" className="ml-1" />
        <Drop />
        <Tool name="redo" className="ml-1" />
        <Drop />
        <Sep />
        <Tools names={['tree', 'grid', 'chartdoc', 'globefolder', 'checkx', 'workbench']} />
        <Sep />
        <Tool name="binoc" />
        <Sep />
        <div className="mr-[3px] ml-[2px] flex h-[19px] w-[60px] items-center bg-white">
          <input aria-label="Zoom" defaultValue="100%" className="min-w-0 flex-1 pl-1 text-[14px] outline-none" />
          <span className="bg-[#efefef]">
            <Drop dark />
          </span>
        </div>
        <Sep />
        <Tool name="help" />
      </Bar>
      <Bar>
        <Grip />
        <ComboBox label="Police" className="w-[176px]" />
        <ComboBox label="Taille" className="w-[58px]" />
        <Tools names={['grow', 'shrink']} />
        <Sep />
        <Tools names={['bold', 'italic', 'underline']} />
        <Sep />
        <Tools names={['left', 'center', 'right', 'justify']} />
        <Sep />
        <Tool name="color" />
        <Drop />
        <Tool name="border" className="ml-1" />
        <Drop />
        <Tools names={['suppress', 'lockfmt', 'locksize']} />
        <Sep />
        <Tools names={['euro', 'dot', 'percent', 'decplus', 'decminus']} />
      </Bar>
      <div className="flex">
        <Bar>
          <Grip />
          <Tools names={['ab', 'group', 'sigma', 'crosstab', 'olap', 'subreport', 'line', 'box', 'picture', 'chart', 'globe']} />
        </Bar>
        <Bar>
          <Grip />
          <Tools names={['link', 'sections']} />
          <Sep />
          <Tools names={['topn', 'sort', 'groupsort']} />
          <Sep />
          <Tools names={['select', 'formula', 'folderup', 'resize']} />
          <Sep />
          <Tools names={['hand', 'globelink', 'codebox']} />
        </Bar>
        <Bar>
          <Grip />
          <Tools names={['refresh', 'stop', 'first', 'prev', 'next', 'last']} />
          <Sep />
          <Tools names={['back', 'forward']} />
        </Bar>
      </div>
    </div>
  );
}

function StatusBar() {
  const cell = 'h-5 border border-[#a5a5a5]';
  return (
    <footer className="relative flex h-[25px] shrink-0 items-end bg-[#eee]">
      <p className="self-center pt-[6px] pl-[5px] text-[14px]">Pour obtenir de l'aide, appuyez sur la touche F1</p>
      <div className="absolute bottom-0 left-[944px] flex h-[22px] w-[81px] items-center justify-center rounded-[2px] border border-[#666] bg-gradient-to-b from-white to-[#e4e5f0]">
        Pense-bête
      </div>
      <div className="ml-auto flex gap-[3px]">
        <span className={clsx(cell, 'w-[168px]')} />
        <span className={clsx(cell, 'w-[176px]')} />
        <span className={clsx(cell, 'w-[137px]')} />
        <span className={clsx(cell, 'w-[59px]')} />
        <span className={clsx(cell, 'w-[28px] border-r-0')} />
      </div>
    </footer>
  );
}

export default function App() {
  return (
    <div className="flex h-screen flex-col overflow-hidden bg-[#efefef] font-['DejaVu_Sans_Condensed','Noto_Sans',sans-serif] text-[13px] leading-4 text-[#2b2b2b]">
      <TitleBar />
      <div className="h-[115px] shrink-0 bg-gradient-to-r from-[#e4e4e4] via-[#eeeeee] to-white">
        <MenuBar />
        <Toolbars />
      </div>
      <div className="flex min-h-0 flex-1">
        <div className="flex min-w-0 flex-1 flex-col">
          <DocumentPane />
          <DependencyChecker />
        </div>
        <aside className="ml-1 flex w-[457px] shrink-0 flex-col">
          <Workbench />
          <FieldExplorer />
        </aside>
      </div>
      <StatusBar />
    </div>
  );
}
